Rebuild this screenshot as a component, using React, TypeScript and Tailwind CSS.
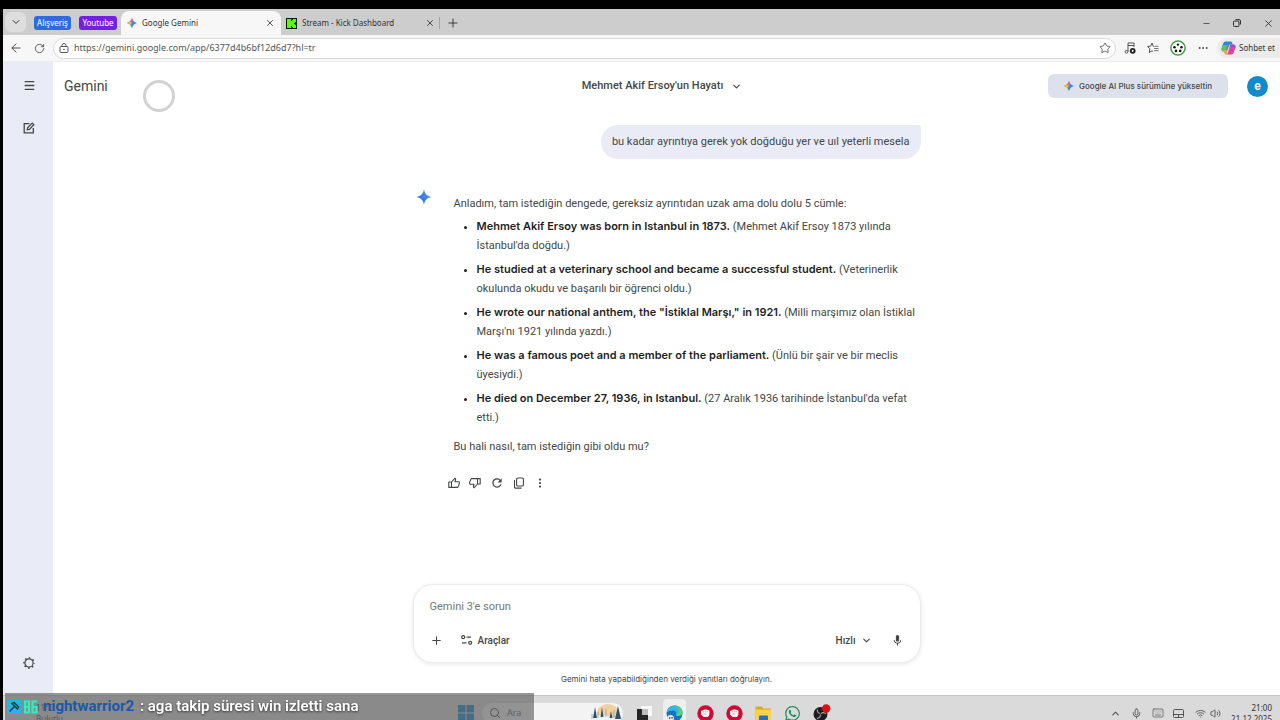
import type { ReactNode } from "react";
import {
  ArrowLeft,
  ChevronDown,
  ChevronUp,
  Keyboard,
  Menu,
  Mic,
  Minus,
  MoreHorizontal,
  MoreVertical,
  Plus,
  RotateCw,
  Search,
  Star,
  Volume2,
  Wifi,
  X,
} from "lucide-react";
import { FaWhatsapp } from "react-icons/fa";
import { MdMic, MdRefresh } from "react-icons/md";

interface Sentence {
  en: string;
  tr: string;
}

const SENTENCES: Sentence[] = [
  { en: "Mehmet Akif Ersoy was born in Istanbul in 1873.", tr: "(Mehmet Akif Ersoy 1873 yılında İstanbul'da doğdu.)" },
  { en: "He studied at a veterinary school and became a successful student.", tr: "(Veterinerlik okulunda okudu ve başarılı bir öğrenci oldu.)" },
  { en: "He wrote our national anthem, the \"İstiklal Marşı,\" in 1921.", tr: "(Milli marşımız olan İstiklal Marşı'nı 1921 yılında yazdı.)" },
  { en: "He was a famous poet and a member of the parliament.", tr: "(Ünlü bir şair ve bir meclis üyesiydi.)" },
  { en: "He died on December 27, 1936, in Istanbul.", tr: "(27 Aralık 1936 tarihinde İstanbul'da vefat etti.)" },
];

function IconButton({ label, className = "", children }: { label: string; className?: string; children: ReactNode }) {
  return (
    <button type="button" aria-label={label} className={`flex shrink-0 items-center justify-center ${className}`}>
      {children}
    </button>
  );
}

const SPARK = "M12 0c1 7 5 11 12 12-7 1-11 5-12 12-1-7-5-11-12-12 7-1 11-5 12-12z";

function Spark({ id, size, colourful }: { id: string; size: number; colourful?: boolean }) {
  return (
    <svg width={size} height={size} viewBox="0 0 24 24" aria-hidden="true" className="shrink-0">
      <defs>
        <linearGradient id={id} x1="0" y1="0.8" x2="1" y2="0.2">
          <stop offset="0" stopColor="#2f63dd" />
          <stop offset="1" stopColor="#5a9cf5" />
        </linearGradient>
        <clipPath id={`${id}-clip`}>
          <path d="M12 0c1.500 6 6 10.500 12 12-6 1.500-10.500 6-12 12-1.500-6-6-10.500-12-12 6-1.500 10.500-6 12-12z" />
        </clipPath>
      </defs>
      {colourful ? (
        <g clipPath={`url(#${id}-clip)`}>
          <rect width="24" height="24" fill="#3f86f0" />
          <path d="M0 0h16l-4 11-12 1z" fill="#ef6a5e" />
          <path d="M0 9l11 1-1 8-10 2z" fill="#f3bd2e" />
          <path d="M4 24l6-10 4 10z" fill="#35a866" />
        </g>
      ) : (
        <path d={SPARK} fill={`url(#${id})`} />
      )}
    </svg>
  );
}

function KickLogo() {
  return (
    <svg width="11" height="11" viewBox="0 0 11 11" aria-hidden="true" className="shrink-0">
      <rect width="11" height="11" fill="#0b1a08" />
      <path d="M1 1h4v2h1V2h1V1h3v3H9v1H8v1h1v1h1v3H7V9H6V8H5v2H1z" fill="#53fc18" />
    </svg>
  );
}

function LockIcon() {
  return (
    <svg width="10" height="10" viewBox="0 0 10 10" fill="none" stroke="#555" aria-hidden="true">
      <rect x="1" y="3.500" width="8" height="6" rx="1" />
      <path d="M3 3.500V2.500a2 2 0 0 1 4 0v1" />
      <circle cx="5" cy="6.500" r=".4" fill="#555" />
    </svg>
  );
}

function RestoreIcon() {
  return (
    <svg width="8" height="8" viewBox="0 0 8 8" fill="none" stroke="#333" aria-hidden="true">
      <rect x=".5" y="2" width="5.500" height="5.500" rx="1" />
      <path d="M2.500 .6H6A1.500 1.500 0 0 1 7.500 2v3.500" />
    </svg>
  );
}

function MusicIcon() {
  return (
    <svg width="12" height="12" viewBox="0 0 12 12" fill="none" stroke="#555" aria-hidden="true">
      <path d="M4 9.500V1h6v4M4 3.500h6" />
      <circle cx="2.500" cy="9.800" r="1.400" />
      <circle cx="8.700" cy="8.800" r="2.900" fill="#222" stroke="none" />
      <path d="M7.900 7.400v2.800l2.200-1.400z" fill="#fff" stroke="none" />
    </svg>
  );
}

function FavouritesIcon() {
  return (
    <svg width="12" height="12" viewBox="0 0 12 12" fill="none" stroke="#555" strokeLinejoin="round" aria-hidden="true">
      <path d="M7.500 4.300H6.300L5 1 3.700 4.100.6 4.500l2.300 2.300-.6 3.700L5 8.800l1 .6" />
      <path d="M8 4.300h3.500M7 6.500h4.500M7 8.700h4.500" strokeWidth=".8" />
    </svg>
  );
}

function ReelAvatar() {
  return (
    <svg width="16" height="16" viewBox="0 0 16 16" aria-hidden="true">
      <circle cx="8" cy="8" r="7.100" fill="#fff" stroke="#49a04c" strokeWidth="1.500" />
      <g fill="#181818">
        <circle cx="8" cy="4.600" r="1.200" />
        <circle cx="4.500" cy="7.200" r="1.300" />
        <circle cx="11.500" cy="7.200" r="1.300" />
        <circle cx="6" cy="10.900" r="1.300" />
        <circle cx="10.200" cy="10.900" r="1.300" />
      </g>
    </svg>
  );
}

function CopilotLogo() {
  return (
    <svg width="15" height="14" viewBox="0 0 15 14" aria-hidden="true">
      <path d="M4.500.5h5c1 0 1.400.6 1.700 1.500l.5 1.500H8.500L6 10.500H3C1 10.500 0 9 .7 7l1.500-4.500C2.600 1.200 3.300.5 4.500.5z" fill="#2a87dc" />
      <path d="M.7 7l1-3h5L5 10.500H3C1 10.500 0 9 .7 7z" fill="#5cbf62" />
      <path d="M2 9h3.500l1 4.500H5.200c-1 0-1.500-.6-1.800-1.500z" fill="#f2a23a" />
      <path d="M10.500 13.500h-5c1 0 1.300-.9 1.600-1.900L9.200 3.500H12c2 0 3 1.500 2.300 3.500l-1.500 4.500c-.5 1.300-1.100 2-2.300 2z" fill="#e0449c" />
      <path d="M8.800 5l.5-1.500H12c2 0 3 1.500 2.300 3.500z" fill="#9b4de0" />
    </svg>
  );
}

function ComposeIcon() {
  return (
    <svg width="12" height="12" viewBox="0 0 12 12" fill="none" stroke="#444746" strokeWidth="1.300" aria-hidden="true">
      <path d="M6.500 1.700H1.200v9.100h9.100V6" />
      <path d="M4.300 7.700l.3-2L9.200 1.100l1.700 1.700-4.600 4.600z" />
    </svg>
  );
}

function GearIcon() {
  return (
    <svg width="12" height="12" viewBox="0 0 12 12" fill="none" stroke="#444746" aria-hidden="true">
      <circle cx="6" cy="6" r="4.100" strokeWidth="1.200" />
      <circle cx="6" cy="6" r="5.100" strokeWidth="1.400" strokeDasharray="1.600 2.405" strokeDashoffset="0.800" />
    </svg>
  );
}

function ThumbIcon({ down }: { down?: boolean }) {
  return (
    <svg
      width="12"
      height="12"
      viewBox="0 0 12 12"
      fill="none"
      stroke="currentColor"
      strokeWidth="1.100"
      strokeLinejoin="round"
      aria-hidden="true"
      className={down ? "rotate-180" : ""}
    >
      <path d="M3.500 5L7 1.200q.8.500.6 1.300L7 4.800h3.600q.8 0 .8.800v1L9.800 10.400H3.500zM3.500 5H.8v5.400h2.700" />
    </svg>
  );
}

function CopyIcon() {
  return (
    <svg width="12" height="12" viewBox="0 0 12 12" fill="none" stroke="currentColor" strokeWidth="1.100" aria-hidden="true">
      <rect x="3.600" y="1" width="6.800" height="8" rx="1" />
      <path d="M1.500 3v7.300q0 .8.800.8H8.500" />
    </svg>
  );
}

function ToolsIcon() {
  return (
    <svg width="12" height="10" viewBox="0 0 12 10" fill="none" stroke="#444746" strokeWidth="1.200" aria-hidden="true">
      <circle cx="2.200" cy="2.200" r="1.500" />
      <path d="M5.500 2.200H10M1 7.800h4.500" />
      <circle cx="9.200" cy="7.800" r="1.500" />
    </svg>
  );
}

function TabStrip() {
  return (
    <div className="flex h-[26px] shrink-0 items-end bg-[#cdcdcd] text-[8px] text-[#333]">
      <IconButton label="Sekme arama" className="mr-2 mb-[3px] ml-[2px] h-5 w-[21px] rounded-md bg-[#dedede]">
        <ChevronDown size={12} strokeWidth={2} />
      </IconButton>
      <button type="button" className="mb-[5px] h-[14px] w-[37px] rounded-[3px] bg-[#2f6be0] leading-none text-white">
        Alışveriş
      </button>
      <button type="button" className="mr-1 mb-[5px] ml-2 h-[14px] w-[38px] rounded-[3px] bg-[#7420e2] leading-none text-white">
        Youtube
      </button>
      <div className="flex h-6 w-40 items-center rounded-t-lg bg-[#f7f7f7] px-[6px]">
        <Spark id="tab-spark" size={10} colourful />
        <span className="ml-[5px] flex-1 truncate">Google Gemini</span>
        <IconButton label="Sekmeyi kapat"><X size={10} strokeWidth={2} /></IconButton>
      </div>
      <div className="flex h-6 w-[158px] items-center pr-1 pl-[5px]">
        <KickLogo />
        <span className="ml-[5px] flex-1 truncate">Stream - Kick Dashboard</span>
        <IconButton label="Sekmeyi kapat"><X size={10} strokeWidth={2} /></IconButton>
      </div>
      <div className="flex h-6 items-center gap-[6px]">
        <span className="h-3 w-px bg-[#a5a5a5]" />
        <IconButton label="Yeni sekme"><Plus size={14} strokeWidth={1.600} /></IconButton>
      </div>
      <div className="ml-auto flex h-6 items-center gap-[22px] pr-[6px]">
        <IconButton label="Simge durumuna küçült"><Minus size={9} strokeWidth={2} /></IconButton>
        <IconButton label="Önceki boyut"><RestoreIcon /></IconButton>
        <IconButton label="Kapat"><X size={11} strokeWidth={2} /></IconButton>
      </div>
    </div>
  );
}

function AddressBar() {
  return (
    <div className="flex h-[27px] shrink-0 items-center border-b border-[#ececec] bg-[#f7f7f7] pl-[6px] text-[#444]">
      <IconButton label="Geri"><ArrowLeft size={14} strokeWidth={1.600} /></IconButton>
      <IconButton label="Yenile" className="ml-[11px]"><RotateCw size={11} strokeWidth={1.800} /></IconButton>
      <div className="ml-2 flex h-[21px] flex-1 items-center rounded-full border border-[#dadada] bg-white pr-1 pl-[5px]">
        <LockIcon />
        <input
          aria-label="Adres çubuğu"
          defaultValue="https://gemini.google.com/app/6377d4b6bf12d6d7?hl=tr"
          className="ml-[5px] min-w-0 flex-1 bg-transparent text-[9px] text-[#555] outline-none"
        />
        <IconButton label="Sık kullanılanlara ekle"><Star size={12} strokeWidth={1.600} /></IconButton>
      </div>
      <div className="ml-2 flex items-center gap-[11px]">
        <IconButton label="Müzik"><MusicIcon /></IconButton>
        <IconButton label="Sık kullanılanlar"><FavouritesIcon /></IconButton>
        <IconButton label="Profil"><ReelAvatar /></IconButton>
        <IconButton label="Ayarlar ve daha fazlası"><MoreHorizontal size={12} /></IconButton>
      </div>
      <button type="button" className="ml-2 flex h-5 items-center gap-[3px] rounded-l-full bg-[#ebebeb] pr-[5px] pl-1 text-[8px] text-[#333]">
        <CopilotLogo />
        Sohbet et
      </button>
    </div>
  );
}

function Answer() {
  return (
    <div className="mt-[28px] flex">
      <div className="w-[41px] shrink-0 pt-[2px] pl-[3px]">
        <Spark id="answer-spark" size={16} />
      </div>
      <div className="min-w-0 flex-1 pt-[7px]">
        <p className="leading-5">Anladım, tam istediğin dengede, gereksiz ayrıntıdan uzak ama dolu dolu 5 cümle:</p>
        <ul className="mt-[3px] flex list-disc flex-col gap-[5px] pl-[23px] leading-[19px] marker:text-[#1f1f1f]">
          {SENTENCES.map((s) => (
            <li key={s.en}>
              <b className="font-[Inter,sans-serif] font-semibold text-[#1f1f1f]">{s.en}</b> {s.tr}
            </li>
          ))}
        </ul>
        <p className="mt-[10px] leading-5">Bu hali nasıl, tam istediğin gibi oldu mu?</p>
        <div className="mt-[19px] -ml-[6px] flex items-center gap-[9px] text-[#444746]">
          <IconButton label="İyi yanıt"><ThumbIcon /></IconButton>
          <IconButton label="Kötü yanıt"><ThumbIcon down /></IconButton>
          <IconButton label="Yeniden oluştur"><MdRefresh size={14} /></IconButton>
          <IconButton label="Kopyala"><CopyIcon /></IconButton>
          <IconButton label="Diğer"><MoreVertical size={12} strokeWidth={2.500} /></IconButton>
        </div>
      </div>
    </div>
  );
}

function Composer() {
  return (
    <form className="flex h-[79px] flex-col justify-between rounded-[20px] border border-[#ececec] bg-white px-4 pt-[11px] pb-3 shadow-[0_1px_4px_rgba(0,0,0,0.10)]">
      <input
        aria-label="İstem"
        placeholder="Gemini 3'e sorun"
        className="h-5 bg-transparent text-[11px] outline-none placeholder:text-[#747775]"
      />
      <div className="flex h-5 items-center text-[10px] font-medium text-[#444746]">
        <IconButton label="Dosya ekle"><Plus size={13} strokeWidth={2} /></IconButton>
        <button type="button" className="ml-[18px] flex items-center gap-[5px]">
          <ToolsIcon />
          Araçlar
        </button>
        <button type="button" className="ml-auto flex items-center gap-[5px]">
          Hızlı
          <ChevronDown size={11} strokeWidth={2.500} />
        </button>
        <IconButton label="Mikrofon" className="ml-[19px]"><MdMic size={13} /></IconButton>
      </div>
    </form>
  );
}

function GeminiPage() {
  return (
    <div className="flex min-h-0 flex-1 bg-white font-[Roboto,'Noto_Sans',sans-serif] text-[#444746]">
      <nav className="flex w-[50px] shrink-0 flex-col items-center bg-[#e9ecf7] pt-[17px] pb-[26px] pl-[2px]">
        <IconButton label="Menü"><Menu size={13} strokeWidth={2.400} /></IconButton>
        <IconButton label="Yeni sohbet" className="mt-[30px]"><ComposeIcon /></IconButton>
        <IconButton label="Ayarlar ve yardım" className="mt-auto"><GearIcon /></IconButton>
      </nav>
      <main className="flex min-w-0 flex-1 flex-col">
        <header className="grid h-12 shrink-0 grid-cols-3 items-center pr-3 pl-[11px]">
          <div className="flex items-center">
            <span className="w-[79px] text-[14px]">Gemini</span>
            <span className="relative top-[10px] h-8 w-8 rounded-full border-[3px] border-[#d2d2d2]" />
          </div>
          <button type="button" className="flex items-center justify-center gap-2 pr-2 text-[11px] font-medium">
            Mehmet Akif Ersoy'un Hayatı
            <ChevronDown size={11} strokeWidth={2.500} />
          </button>
          <div className="flex items-center justify-end gap-[19px]">
            <button type="button" className="flex h-6 w-[180px] items-center justify-center gap-[5px] rounded-md bg-[#dde1eb] font-[Inter,sans-serif] text-[8px] font-medium">
              <Spark id="upgrade-spark" size={10} colourful />
              Google AI Plus sürümüne yükseltin
            </button>
            <button type="button" className="h-[21px] w-[21px] rounded-full bg-[#128bcb] text-[12px] leading-none font-semibold text-white">
              e
            </button>
          </div>
        </header>
        <section className="mx-auto flex w-[508px] max-w-full flex-1 flex-col pt-[15px] text-[11px]">
          <p className="self-end rounded-[17px] rounded-tr-[3px] bg-[#e9ecf7] px-[11px] py-2 leading-[18px]">
            bu kadar ayrıntıya gerek yok doğduğu yer ve uıl yeterli mesela
          </p>
          <Answer />
          <div className="mt-auto">
            <Composer />
            <p className="py-2 text-center font-[Inter,sans-serif] text-[8px] leading-4">
              Gemini hata yapabildiğinden verdiği yanıtları doğrulayın.
            </p>
          </div>
        </section>
      </main>
    </div>
  );
}

function StartLogo() {
  return (
    <svg width="16" height="16" viewBox="0 0 16 16" fill="#1488cf" aria-hidden="true">
      <path d="M0 0h7.500v7.500H0zM8.500 0H16v7.500H8.500zM0 8.500h7.500V16H0zM8.500 8.500H16V16H8.500z" />
    </svg>
  );
}

function WinterArt() {
  return (
    <svg width="32" height="19" viewBox="0 0 32 19" aria-hidden="true" className="shrink-0">
      <ellipse cx="17" cy="9" rx="11" ry="9" fill="#f1cf9e" />
      <path d="M0 14q8-5 16-2t16-1v8H0z" fill="#eef3f6" />
      <g fill="#315566">
        <path d="M4 3l2 11H2zM27 2l3 13h-6zM11 3l1.500 10h-3zM20 7l1.500 7h-3z" />
      </g>
      <path d="M7 8v6M15 5v8M23 6v8M1 10v5" stroke="#8ba2ae" strokeWidth=".8" />
    </svg>
  );
}

function EdgeLogo() {
  return (
    <svg width="17" height="17" viewBox="0 0 17 17" aria-hidden="true">
      <circle cx="8.500" cy="8.500" r="8" fill="#1673c5" />
      <path d="M.5 8C1 3.500 4.500.5 8.800.5c4.500 0 7.700 3 7.700 6.500 0 2.500-2 4-4.500 4-2 0-2.500-1-2-2 .8-1.500-.5-3.500-3-3.500-3 0-5.500 1-6.500 2.500z" fill="#35b8dc" />
      <path d="M11 1c3.500 1 5.500 3.500 5.500 6 0 2.500-2 4-4.500 4-1 0-1.800-.4-2-1 3.500-1 4-5 1-9z" fill="#5ed06b" />
      <circle cx="4.500" cy="13.500" r="3.500" fill="#e8eee9" />
      <path d="M3 12.200h1.200v1.500H3zM5.500 12h1.200v1.500H5.500z" fill="#222" />
    </svg>
  );
}

function FistLogo() {
  return (
    <svg width="17" height="17" viewBox="0 0 17 17" aria-hidden="true">
      <circle cx="8.500" cy="8.500" r="8.200" fill="#cf0a35" />
      <path d="M4 6.500q0-1 1-1h1q.3-1 1.300-.8.8-.7 1.600 0 1-.5 1.600.3 1.800-.2 1.900 1v3.500L11 12H6.800L4.200 9.800z" fill="#fff" />
      <path d="M6.300 6v1.500M8.300 5.500v2M10.200 6v1.500M6 9h3" stroke="#cf0a35" strokeWidth=".4" />
    </svg>
  );
}

function ObsLogo() {
  return (
    <svg width="18" height="18" viewBox="0 0 18 18" aria-hidden="true">
      <circle cx="7.500" cy="10" r="7" fill="#1c1c1e" />
      <path d="M7 9.500Q3.500 8.500 4.500 5.500M8 9.500q3-2 5 .5M7.500 10.500q0 3.500-3.500 4" fill="none" stroke="#a5a5a5" strokeWidth="1.100" />
      <circle cx="13.200" cy="4.500" r="4.200" fill="#e30c17" />
    </svg>
  );
}

function FolderLogo() {
  return (
    <svg width="17" height="16" viewBox="0 0 17 16" aria-hidden="true">
      <path d="M.5 1.500h6l2 2H16v12H.5z" fill="#dca522" />
      <path d="M.5 4.500H16v11H.5z" fill="#fbd04c" />
      <path d="M4 11.500q0-1 1-1h7q1 0 1 1V16H4z" fill="#1a73c8" />
    </svg>
  );
}

function TaskViewLogo() {
  return (
    <svg width="15" height="16" viewBox="0 0 15 16" aria-hidden="true">
      <path d="M4 1h11v10H4z" fill="#f6f6f6" />
      <path d="M0 4h5v6h6v6H0z" fill="#262626" />
      <path d="M5 4h6v6H5z" fill="#bdbdbd" />
    </svg>
  );
}

function TouchpadIcon() {
  return (
    <svg width="11" height="9" viewBox="0 0 11 9" fill="none" stroke="#555" aria-hidden="true">
      <rect x=".5" y=".5" width="10" height="8" rx="1" />
      <path d="M.5 5.500h10M5.500 5.500v3" />
    </svg>
  );
}

function Taskbar() {
  return (
    <footer className="h-[25px] shrink-0 overflow-hidden border-t border-[#c4c4c4] bg-[#dadada] text-[#444]">
      <div className="flex h-[34px] items-center">
        <div className="w-[455px] shrink-0 pl-[33px] text-[8px] leading-[11px]">
          <p>11°C</p>
          <p>Bulutlu</p>
        </div>
        <IconButton label="Başlat"><StartLogo /></IconButton>
        <label className="ml-2 flex h-5 w-[141px] shrink-0 items-center overflow-hidden rounded-full bg-[#f3f3f3] pl-[7px]">
          <Search size={12} />
          <input placeholder="Ara" aria-label="Ara" className="ml-[6px] min-w-0 flex-1 bg-transparent text-[9px] outline-none placeholder:text-[#666]" />
          <WinterArt />
        </label>
        <div className="ml-[14px] flex items-center gap-3">
          <IconButton label="Görev görünümü"><TaskViewLogo /></IconButton>
          <IconButton label="Microsoft Edge" className="-mx-px h-7 w-[23px] rounded bg-[#eeeeee]"><EdgeLogo /></IconButton>
          <IconButton label="Yumruk"><FistLogo /></IconButton>
          <IconButton label="Yumruk 2"><FistLogo /></IconButton>
          <IconButton label="Dosya Gezgini"><FolderLogo /></IconButton>
          <IconButton label="WhatsApp"><FaWhatsapp size={17} color="#238a63" /></IconButton>
          <IconButton label="OBS"><ObsLogo /></IconButton>
        </div>
        <div className="ml-auto flex items-center text-[#555]">
          <IconButton label="Gizli simgeler"><ChevronUp size={11} strokeWidth={2.500} /></IconButton>
          <IconButton label="Mikrofon" className="ml-[10px]"><Mic size={11} /></IconButton>
          <IconButton label="Klavye" className="ml-[10px]"><Keyboard size={12} strokeWidth={1.500} /></IconButton>
          <IconButton label="Dokunmatik yüzey" className="ml-[9px]"><TouchpadIcon /></IconButton>
          <IconButton label="Ağ" className="ml-[11px]"><Wifi size={11} /></IconButton>
          <IconButton label="Ses" className="ml-1"><Volume2 size={11} /></IconButton>
        </div>
        <div className="ml-[10px] pr-2 text-right text-[8px] leading-[11px] text-[#333]">
          <p>21:00</p>
          <p>21.12.2025</p>
        </div>
      </div>
    </footer>
  );
}

function ChatOverlay() {
  return (
    <div className="absolute bottom-0 left-[5px] flex h-[27px] w-[529px] items-center bg-[#606060]/65 pl-[2px] font-[Roboto,sans-serif] text-[15px] text-white">
      <svg width="14" height="14" viewBox="0 0 14 14" aria-hidden="true">
        <rect width="14" height="14" rx="1" fill="#27b4e6" />
        <path d="M2.500 11.500l5-5M5 3.500l2-1 4.500 4.500-1 2z" fill="none" stroke="#23414e" strokeWidth="1.600" />
      </svg>
      <svg width="15" height="14" viewBox="0 0 15 14" fill="none" stroke="#2bf0c2" strokeWidth="2.200" className="ml-[2px]" aria-hidden="true">
        <path d="M2 1.500h4v11H2zM2 7h4M14 1.500H9.500v11h4V7H9.500" />
      </svg>
      <span className="ml-[5px] font-bold text-[#1c58a8]">nightwarrior2</span>
      <span className="ml-[6px] font-semibold drop-shadow-[0_1px_1px_rgba(0,0,0,0.6)]">: aga takip süresi win izletti sana</span>
    </div>
  );
}

export default function App() {
  return (
    <div className="relative flex h-screen flex-col overflow-hidden bg-black pt-[9px] pl-[3px] font-['Noto_Sans',sans-serif]">
      <TabStrip />
      <AddressBar />
      <GeminiPage />
      <Taskbar />
      <ChatOverlay />
    </div>
  );
}
